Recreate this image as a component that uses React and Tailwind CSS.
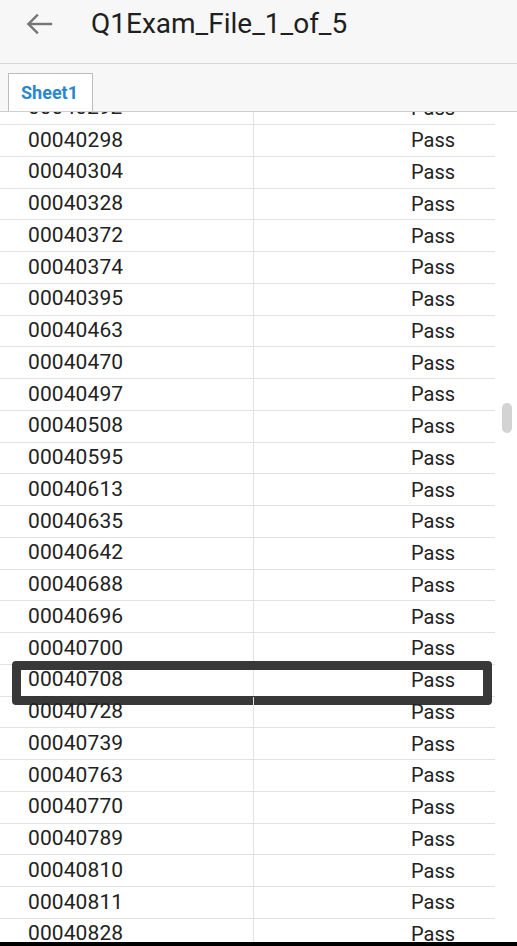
import React from "react";

const ids = [
  "00040298","00040304","00040328","00040372","00040374","00040395","00040463",
  "00040470","00040497","00040508","00040595","00040613","00040635","00040642",
  "00040688","00040696","00040700","00040708","00040728","00040739","00040763",
  "00040770","00040789","00040810","00040811","00040828",
];

function Row({ id, highlight }) {
  return (
    <div className="relative flex h-[31.76px] w-[495px] border-b border-[#e2e2e2]">
      <div className="flex w-[254px] items-center border-r border-[#e2e2e2] pl-[28px] text-[21px] tracking-[0.1px]">{id}</div>
      <div className="flex flex-1 items-center pl-[157px] text-[20px]">Pass</div>
      {highlight && (
        <div className="absolute left-[12px] top-[-4px] h-[44px] w-[480px] rounded-[4px] border-[9px] border-[#383838]" />
      )}
    </div>
  );
}

export default function App() {
  return (
    <div className="relative h-[946px] w-[517px] overflow-hidden bg-white text-[#222]" style={{ fontFamily: "Roboto, 'Liberation Sans', sans-serif" }}>
      <div className="flex h-[64px] items-start border-b border-[#d6d6d6] bg-[#f7f7f7] pt-[9px] shadow-[0_1px_2px_rgba(0,0,0,0.08)]">
        <svg className="ml-[26px] mt-[4px]" width="27" height="22" viewBox="0 0 27 22" fill="none" stroke="#757575" strokeWidth="2.4" strokeLinecap="square">
          <path d="M25 11H3" />
          <path d="M11 2.5L2.5 11L11 19.5" />
        </svg>
        <div className="ml-[38px] text-[28px] leading-[30px] text-[#202020]">Q1Exam_File_1_of_5</div>
      </div>
      <div className="flex h-[48px] items-end border-b border-[#cfcfcf] bg-[#f7f7f7] pl-[8px]">
        <div className="flex h-[38px] w-[85px] items-center border border-b-0 border-[#bdbdbd] bg-white pl-[12px] text-[18px] font-bold text-[#2a86cf]">
          Sheet1
        </div>
      </div>
      <div>
        <div className="h-[13px] w-[495px] overflow-hidden border-b border-[#e2e2e2]">
          <div className="mt-[-20px] flex h-[31.76px] w-[495px]">
            <div className="flex w-[254px] items-center border-r border-[#e2e2e2] pl-[28px] text-[21px]">00040292</div>
            <div className="flex flex-1 items-center pl-[157px] text-[20px]">Pass</div>
          </div>
        </div>
        {ids.map((id) => (
          <Row key={id} id={id} highlight={id === "00040708"} />
        ))}
      </div>
      <div className="absolute left-[502px] top-[403px] h-[30px] w-[10px] rounded-full bg-[#d3d3d3]" />
      <div className="absolute bottom-0 left-0 h-[4px] w-full bg-black" />
    </div>
  );
}
